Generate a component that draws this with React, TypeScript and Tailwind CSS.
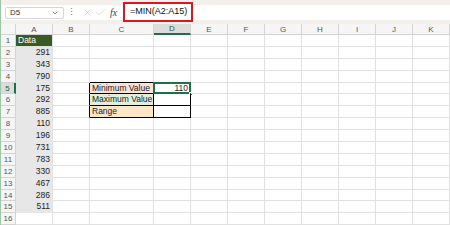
import { ChevronDown, X, Check } from 'lucide-react';

const COLS = ['A', 'B', 'C', 'D', 'E', 'F', 'G', 'H', 'I', 'J', 'K'];
const DATA = [291, 343, 790, 175, 292, 885, 110, 196, 731, 783, 330, 467, 286, 511];
const LABELS: Record<number, { text: string; bg: string }> = {
  5: { text: 'Minimum Value', bg: 'bg-[#fbe2d5]' },
  6: { text: 'Maximum Value', bg: 'bg-[#e2efda]' },
  7: { text: 'Range', bg: 'bg-[#fde6c8]' },
};

function Cell({ row, col }: { row: number; col: string }) {
  const inTable = (col === 'C' || col === 'D') && row >= 5 && row <= 7;
  const leftOfTable = col === 'B' && row >= 5 && row <= 7;
  const aboveTable = (col === 'C' || col === 'D') && row === 4;

  let cls = 'relative h-[11.9px] border-r border-b border-[#e1e1e1] text-[8.5px] leading-[11px] px-[2px] whitespace-nowrap overflow-hidden text-[#222]';
  if (inTable) cls = cls.replace('border-[#e1e1e1]', 'border-black');
  if (leftOfTable) cls += ' !border-r-black';
  if (aboveTable) cls += ' !border-b-black';

  let content: React.ReactNode = null;

  if (col === 'A' && row === 1) {
    cls += ' bg-[#3a5a24] text-white';
    content = 'Data';
  } else if (col === 'A' && row >= 2 && row <= 15) {
    cls += ' bg-[#e8e7e7] text-right !border-b-[#e8e7e7]';
    content = DATA[row - 2];
  } else if (col === 'C' && LABELS[row]) {
    cls += ' ' + LABELS[row].bg;
    content = LABELS[row].text;
  } else if (col === 'D' && row === 5) {
    cls += ' text-right !overflow-visible';
    content = (
      <>
        110
        <div className="absolute -left-px -top-px -right-px -bottom-px border-2 border-[#1e7145]" />
        <div className="absolute -right-[3px] -bottom-[3px] w-[4px] h-[4px] bg-[#1e7145] border border-white" />
      </>
    );
  }

  return <div className={cls}>{content}</div>;
}

export default function App() {
  return (
    <div
      className="w-[450px] h-[225px] overflow-hidden bg-[#f3efea] border-l border-[#9cc7a7]"
      style={{ fontFamily: '"Liberation Sans", Arial, sans-serif' }}>
      {/* Barra de fórmulas */}
      <div className="mt-[5px] h-[15px] bg-white flex items-center relative">
        <div className="ml-[4px] w-[59px] h-[12px] border border-[#d6d6d6] rounded-[2px] flex items-center justify-between px-[4px] text-[8px] text-[#333]">
          <span>D5</span>
          <ChevronDown size={8} strokeWidth={2} className="text-[#555]" />
        </div>
        <span className="ml-[3px] text-[9px] text-[#777] leading-none">⋮</span>
        <X size={11} strokeWidth={1} className="ml-[6px] text-[#b5b5b5]" />
        <Check size={11} strokeWidth={1} className="ml-[2px] text-[#b5b5b5]" />
        <span
          className="ml-[4px] text-[10px] italic text-[#444] leading-none"
          style={{ fontFamily: '"Liberation Serif", serif' }}>
          fx
        </span>
        {/* Resaltado de la fórmula */}
        <div className="absolute left-[122px] top-[-3px] w-[70px] h-[20px] border-2 border-[#e0141c] bg-white flex items-center pl-[5px] text-[9px] text-[#111]">
          =MIN(A2:A15)
        </div>
      </div>

      {/* Hoja */}
      <div className="mt-[4px] grid grid-cols-[15px_37px_37px_64px_37px_37px_37px_37px_37px_37px_37px_37px] bg-white">
        <div className="h-[11px] bg-[#f5f5f5] border-r border-b border-[#d4d4d4]" />
        {COLS.map((c) => (
          <div
            key={c}
            className={
              c === 'D'
                ? 'h-[11px] bg-[#dcdcdc] border-r border-[#d4d4d4] border-b-2 border-b-[#1e7145] text-[8px] leading-[10px] text-center text-[#1e5e3a]'
                : 'h-[11px] bg-[#f5f5f5] border-r border-b border-[#d4d4d4] text-[8px] leading-[11px] text-center text-[#555]'
            }>
            {c}
          </div>
        ))}
        {Array.from({ length: 16 }, (_, i) => i + 1).map((r) => (
          <>
            <div
              key={'h' + r}
              className={
                r === 5
                  ? 'h-[11.9px] bg-[#dcdcdc] border-b border-[#d4d4d4] border-r-2 border-r-[#1e7145] text-[8px] leading-[11px] text-center text-[#1e5e3a]'
                  : 'h-[11.9px] bg-[#f5f5f5] border-r border-b border-[#d4d4d4] text-[8px] leading-[11px] text-center text-[#555]'
              }>
              {r}
            </div>
            {COLS.map((c) => (
              <Cell key={c + r} row={r} col={c} />
            ))}
          </>
        ))}
      </div>
    </div>
  );
}
